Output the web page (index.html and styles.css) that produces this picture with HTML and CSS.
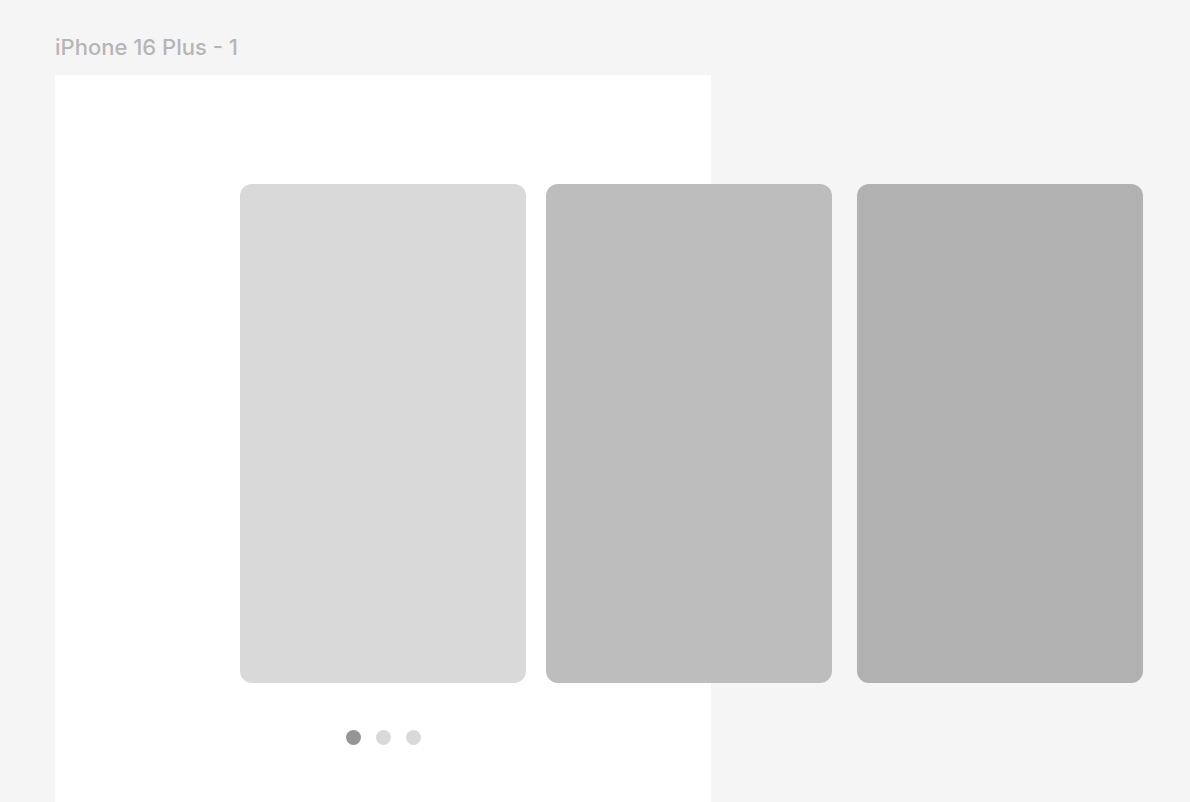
FILE: index.html
```html
<!DOCTYPE html>
<html lang="en">
<head>
<meta charset="utf-8">
<meta name="viewport" content="width=device-width, initial-scale=1">
<title>iPhone 16 Plus - 1</title>
<link rel="stylesheet" href="styles.css">
</head>
<body>
<main class="canvas">
  <h1 class="frame-label">iPhone 16 Plus - 1</h1>
  <section class="board">
    <div class="frame"></div>
    <div class="carousel">
      <div class="card card-light"></div>
      <div class="card card-mid"></div>
      <div class="card card-dark"></div>
    </div>
    <div class="dots">
      <span class="dot dot-active"></span>
      <span class="dot"></span>
      <span class="dot"></span>
    </div>
  </section>
</main>
</body>
</html>
```

FILE: styles.css
```css
* {
  box-sizing: border-box;
}

body {
  margin: 0;
  background: #f5f5f5;
  font-family: Inter, "Liberation Sans", sans-serif;
}

.canvas {
  display: flex;
  flex-direction: column;
  min-height: 100vh;
  padding: 32px 47px 0 55px;
}

.frame-label {
  margin: 0 0 12px;
  color: #b5b5b5;
  font-size: 22px;
  font-weight: 500;
  line-height: 31px;
}

/* The cards run past the right edge of the frame, so both share one grid. */
.board {
  flex: 1;
  display: grid;
  grid-template-columns: 656fr 432fr;
  grid-template-rows: auto 1fr;
}

.frame {
  grid-column: 1;
  grid-row: 1 / 3;
  background: #fff;
}

.carousel {
  grid-column: 1 / 3;
  grid-row: 1;
  display: grid;
  grid-template-columns: 185fr 286fr 20fr 286fr 25fr 286fr;
  padding-top: 109px;
}

.card {
  aspect-ratio: 286 / 499;
  border-radius: 12px;
}

.card-light {
  grid-column: 2;
  background: #d9d9d9;
}

.card-mid {
  grid-column: 4;
  background: #bdbdbd;
}

.card-dark {
  grid-column: 6;
  background: #b1b1b1;
}

.dots {
  grid-column: 1;
  grid-row: 2;
  display: flex;
  justify-content: center;
  gap: 15px;
  padding: 47px 0 56px;
}

.dot {
  width: 15px;
  height: 15px;
  border-radius: 50%;
  background: #d9d9d9;
}

.dot-active {
  background: #959595;
}
```
